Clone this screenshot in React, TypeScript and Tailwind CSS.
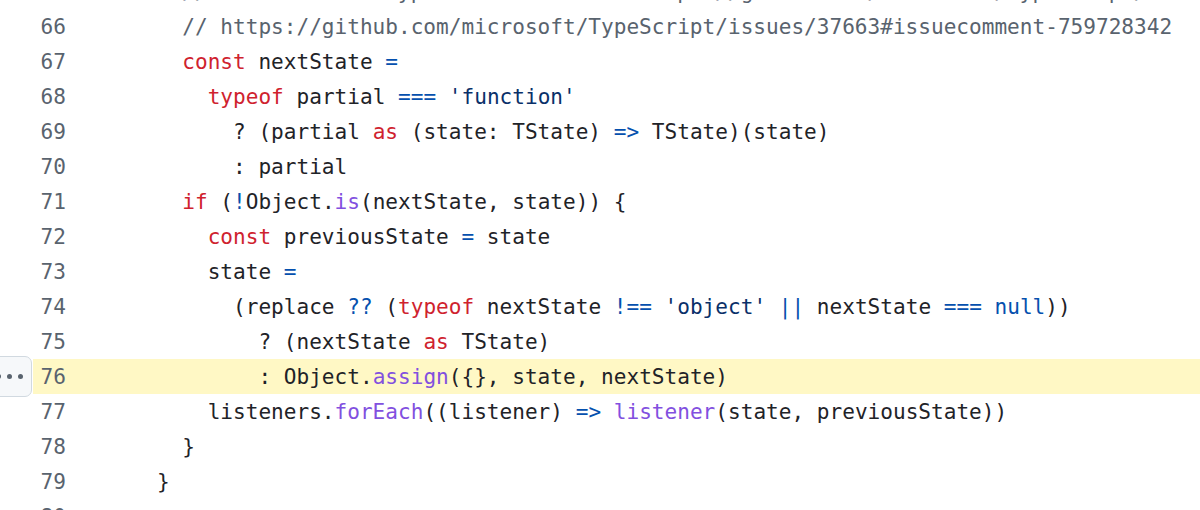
import React from 'react';

type Tok = [string, string?];

const K = 'text-[#cf222e]';
const C = 'text-[#59636e]';
const O = 'text-[#0550ae]';
const S = 'text-[#0a3069]';
const F = 'text-[#8250df]';

const lines: { n: number; toks: Tok[] }[] = [
  {
    n: 65,
    toks: [
      [
        '    // TODO: Remove type assertion once https://github.com/microsoft/TypeScript/issues/37663 is resolved',
        C,
      ],
    ],
  },
  {
    n: 66,
    toks: [['    // https://github.com/microsoft/TypeScript/issues/37663#issuecomment-759728342', C]],
  },
  { n: 67, toks: [['    '], ['const', K], [' nextState '], ['=', O]] },
  {
    n: 68,
    toks: [['      '], ['typeof', K], [' partial '], ['===', O], [' '], ["'function'", S]],
  },
  {
    n: 69,
    toks: [
      ['        ? (partial '],
      ['as', K],
      [' (state: TState) '],
      ['=>', O],
      [' TState)(state)'],
    ],
  },
  { n: 70, toks: [['        : partial']] },
  {
    n: 71,
    toks: [['    '], ['if', K], [' ('], ['!', O], ['Object.'], ['is', F], ['(nextState, state)) {']],
  },
  { n: 72, toks: [['      '], ['const', K], [' previousState '], ['=', O], [' state']] },
  { n: 73, toks: [['      state '], ['=', O]] },
  {
    n: 74,
    toks: [
      ['        (replace '],
      ['??', O],
      [' ('],
      ['typeof', K],
      [' nextState '],
      ['!==', O],
      [' '],
      ["'object'", S],
      [' '],
      ['||', O],
      [' nextState '],
      ['===', O],
      [' '],
      ['null', O],
      ['))'],
    ],
  },
  { n: 75, toks: [['          ? (nextState '], ['as', K], [' TState)']] },
  { n: 76, toks: [['          : Object.'], ['assign', F], ['({}, state, nextState)']] },
  {
    n: 77,
    toks: [
      ['      listeners.'],
      ['forEach', F],
      ['((listener) '],
      ['=>', O],
      [' '],
      ['listener', F],
      ['(state, previousState))'],
    ],
  },
  { n: 78, toks: [['    }']] },
  { n: 79, toks: [['  }']] },
  { n: 80, toks: [['']] },
];

const LineMenu = () => (
  <button className="absolute left-[-12px] top-[-3px] flex h-[41px] w-[44px] items-center justify-end gap-[6px] rounded-[7px] border border-[#d1d9e0] bg-[#f6f8fa] pr-[8px]">
    <span className="h-[5px] w-[5px] rounded-full bg-[#59636e]" />
    <span className="h-[5px] w-[5px] rounded-full bg-[#59636e]" />
    <span className="h-[5px] w-[5px] rounded-full bg-[#59636e]" />
  </button>
);

export default function App() {
  return (
    <div className="h-[510px] w-[1200px] overflow-hidden bg-white font-['DejaVu_Sans_Mono',Menlo,monospace] text-[21.08px] leading-[35px] text-[#1f2328]">
      <div className="-mt-[26.5px]">
        {lines.map((line) => {
          const active = line.n === 76;
          return (
            <div key={line.n} className="relative flex h-[35px]">
              <div className="relative w-[33px] shrink-0">{active && <LineMenu />}</div>
              <div className={`flex flex-1 ${active ? 'bg-[#fff8c5]' : ''}`}>
                <div className="w-[33px] shrink-0 text-right text-[#59636e]">{line.n}</div>
                <pre className="pl-[65.5px] font-['DejaVu_Sans_Mono',Menlo,monospace] whitespace-pre">
                  {line.toks.map(([text, cls], i) => (
                    <span key={i} className={cls}>
                      {text}
                    </span>
                  ))}
                </pre>
              </div>
            </div>
          );
        })}
      </div>
    </div>
  );
}
